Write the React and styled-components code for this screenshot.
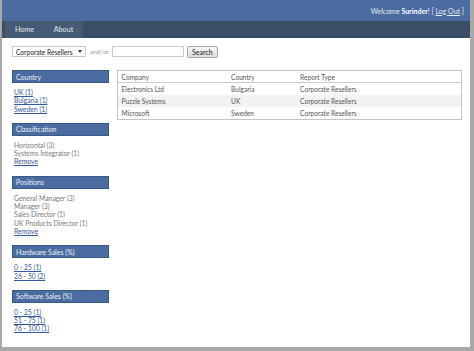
import styled, { createGlobalStyle } from "styled-components"

const GlobalStyle = createGlobalStyle`
  html, body { margin: 0; padding: 0; background: #fff; }
  body { font-family: Lato, "Open Sans", sans-serif; }
`

const Frame = styled.div`
  width: 474px;
  height: 351px;
  box-sizing: border-box;
  border-left: 2px solid #a9a9a9;
  border-right: 4px solid #a9a9a9;
  border-bottom: 4px solid #a9a9a9;
  overflow: hidden;
  display: flex;
  flex-direction: column;
`

const Header = styled.header`
  height: 21px;
  background: #4a6ca0;
  display: flex;
  align-items: center;
  justify-content: flex-end;
  padding-right: 6px;
  font-size: 7px;
  color: #e6ecf5;
  white-space: pre;
`

const Bold = styled.b`
  color: #fff;
  font-weight: 700;
`

const LogOut = styled.a`
  color: #e6ecf5;
  text-decoration: underline;
`

const Nav = styled.nav`
  height: 17px;
  background: #3a4f67;
  display: flex;
  align-items: stretch;
  padding-left: 3px;
`

const Tab = styled.a`
  width: 39px;
  display: flex;
  align-items: center;
  justify-content: center;
  background: #455b75;
  color: #e2e8ef;
  font-size: 7.2px;
`

const Content = styled.main`
  padding: 6px 8px 0 10px;
  display: flex;
  flex-direction: column;
`

const SearchRow = styled.div`
  display: flex;
  align-items: center;
  height: 13px;
  margin-top: 1px;
  white-space: nowrap;
`

const Select = styled.div`
  width: 74px;
  height: 11px;
  border: 1px solid #c8c8c8;
  box-sizing: border-box;
  display: flex;
  align-items: center;
  justify-content: space-between;
  padding: 0 3px 0 3px;
  font-size: 6.6px;
  color: #222;
`

const Arrow = styled.span`
  width: 0;
  height: 0;
  border-left: 2px solid transparent;
  border-right: 2px solid transparent;
  border-top: 3px solid #333;
`

const AndOr = styled.span`
  font-size: 6.4px;
  color: #999;
  margin: 0 3px 0 4px;
`

const Input = styled.div`
  width: 72px;
  height: 11px;
  border: 1px solid #ccc;
  box-sizing: border-box;
`

const Button = styled.div`
  margin-left: 3px;
  width: 31px;
  height: 12px;
  border: 1px solid #aaa;
  border-radius: 2px;
  background: linear-gradient(#f6f6f6, #dcdcdc);
  box-sizing: border-box;
  font-size: 7px;
  color: #222;
  display: flex;
  align-items: center;
  justify-content: center;
`

const Body = styled.div`
  display: flex;
  align-items: flex-start;
  margin-top: 12px;
`

const Sidebar = styled.aside`
  width: 97px;
  display: flex;
  flex-direction: column;
  gap: 10px;
`

const Box = styled.section`
  display: flex;
  flex-direction: column;
`

const BoxTitle = styled.div`
  height: 13px;
  background: #4a6ca0;
  border: 1px solid #3a5a88;
  box-sizing: border-box;
  color: #eef2f8;
  font-size: 7px;
  display: flex;
  align-items: center;
  padding-left: 3px;
`

const List = styled.div`
  display: flex;
  flex-direction: column;
  padding: 5px 0 0 2px;
  font-size: 6.8px;
  line-height: 8.3px;
`

const Item = styled.span`
  color: #7a7a7a;
`

const Link = styled.a`
  color: #34589a;
  text-decoration: underline;
`

const Table = styled.table`
  margin-left: 8px;
  width: 347px;
  table-layout: fixed;
  border-collapse: collapse;
  border: 1px solid #c4c4c4;
  font-size: 6.6px;
  color: #555;
`

const Th = styled.th`
  box-sizing: border-box;
  text-align: left;
  font-weight: 400;
  height: 12px;
  padding: 0 0 0 4px;
  width: ${p => (p.$w ? `${p.$w}px` : "auto")};
  border-bottom: 1px solid #ccc;
`

const Row = styled.tr`
  background: ${p => (p.$alt ? "#f2f2f2" : "#fff")};
`

const Td = styled.td`
  height: 12px;
  padding: 0 0 0 4px;
`

const boxes = [
  { title: "Country", links: ["UK (1)", "Bulgaria (1)", "Sweden (1)"] },
  { title: "Classification", items: ["Horizontal (3)", "Systems Integrator (1)"], links: ["Remove"] },
  { title: "Positions", items: ["General Manager (3)", "Manager (3)", "Sales Director (1)", "UK Products Director (1)"], links: ["Remove"] },
  { title: "Hardware Sales (%)", links: ["0 - 25 (1)", "26 - 50 (2)"] },
  { title: "Software Sales (%)", links: ["0 - 25 (1)", "51 - 75 (1)", "76 - 100 (1)"] },
]

const rows = [
  ["Electronics Ltd", "Bulgaria", "Corporate Resellers"],
  ["Puzzle Systems", "UK", "Corporate Resellers"],
  ["Microsoft", "Sweden", "Corporate Resellers"],
]

const App = () => {
  return (
    <>
      <GlobalStyle />
      <Frame>
        <Header>
          Welcome <Bold>Surinder</Bold>! [ <LogOut>Log Out</LogOut> ]
        </Header>
        <Nav>
          <Tab>Home</Tab>
          <Tab>About</Tab>
        </Nav>
        <Content>
          <SearchRow>
            <Select>Corporate Resellers<Arrow /></Select>
            <AndOr>and/or</AndOr>
            <Input />
            <Button>Search</Button>
          </SearchRow>
          <Body>
            <Sidebar>
              {boxes.map(b => (
                <Box key={b.title}>
                  <BoxTitle>{b.title}</BoxTitle>
                  <List>
                    {(b.items || []).map(i => <Item key={i}>{i}</Item>)}
                    {b.links.map(l => <Link key={l}>{l}</Link>)}
                  </List>
                </Box>
              ))}
            </Sidebar>
            <Table>
              <thead>
                <tr>
                  <Th $w={110}>Company</Th>
                  <Th $w={69}>Country</Th>
                  <Th>Report Type</Th>
                </tr>
              </thead>
              <tbody>
                {rows.map((r, i) => (
                  <Row key={r[0]} $alt={i === 1}>
                    {r.map(c => <Td key={c}>{c}</Td>)}
                  </Row>
                ))}
              </tbody>
            </Table>
          </Body>
        </Content>
      </Frame>
    </>
  )
}

export default App
